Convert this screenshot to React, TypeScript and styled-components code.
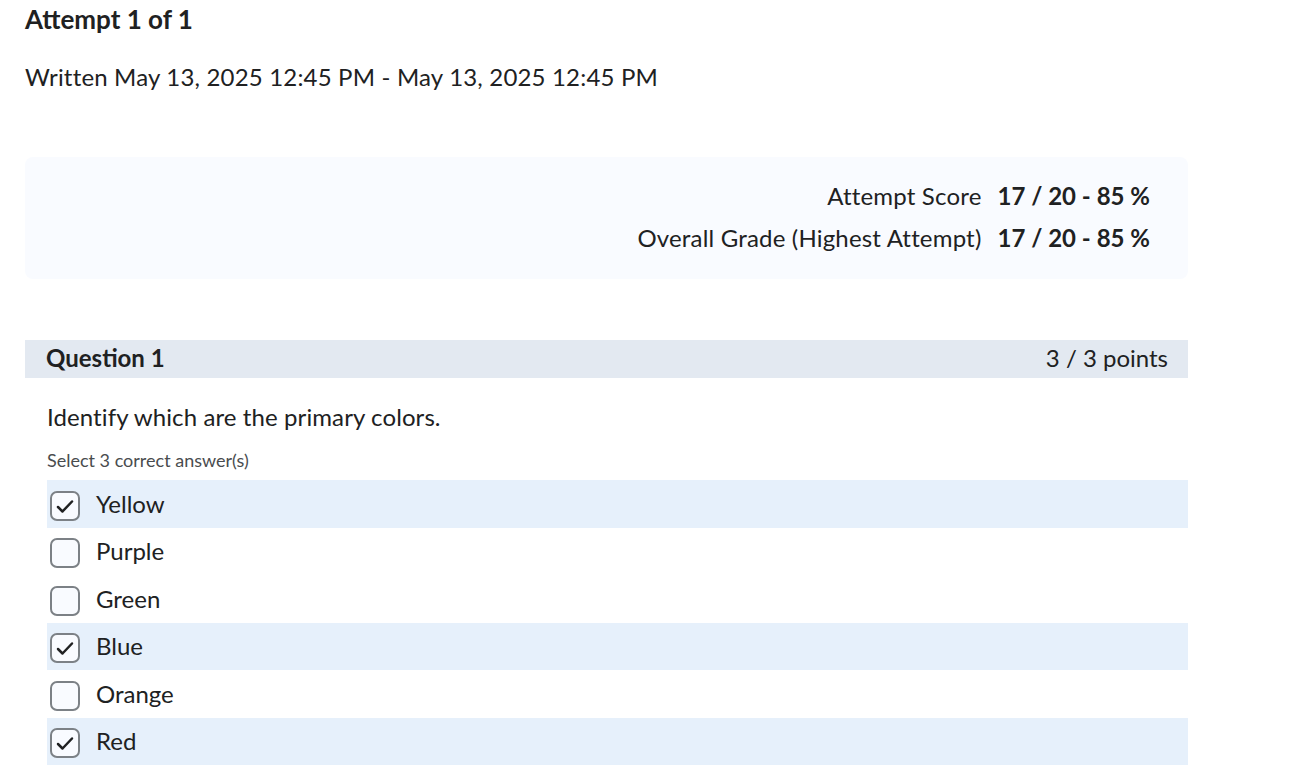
import React from 'react';
import styled, { createGlobalStyle } from 'styled-components';

const GlobalStyle = createGlobalStyle`
  body {
    margin: 0;
    background: #ffffff;
    font-family: Lato, "Noto Sans", sans-serif;
    color: #202122;
  }
`;

const Page = styled.div`
  width: 1163px;
  padding: 0 25px;
`;

const Heading = styled.h2`
  margin: 4px 0 0;
  font-size: 26px;
  font-weight: 700;
  line-height: 30px;
`;

const Written = styled.p`
  margin: 28px 0 0;
  font-size: 24px;
  line-height: 30px;
  letter-spacing: 0.18px;
`;

const ScorePanel = styled.div`
  margin-top: 65px;
  height: 122px;
  box-sizing: border-box;
  padding: 24px 38px 0 0;
  background: #f9fbff;
  border-radius: 8px;
  display: flex;
  justify-content: flex-end;
`;

const ScoreGrid = styled.div`
  display: grid;
  grid-template-columns: auto auto;
  column-gap: 16px;
  row-gap: 12px;
  align-content: start;
  font-size: 24px;
  line-height: 30px;
  letter-spacing: 0.18px;
`;

const ScoreLabel = styled.span`
  text-align: right;
`;

const ScoreValue = styled.span`
  font-weight: 700;
  letter-spacing: 0;
`;

const QuestionHeader = styled.div`
  margin-top: 61px;
  height: 38px;
  display: flex;
  align-items: center;
  justify-content: space-between;
  padding: 0 20px 2px 21px;
  box-sizing: border-box;
  background: #e3e9f1;
  font-size: 24px;
  line-height: 30px;
`;

const QuestionTitle = styled.span`
  font-weight: 700;
`;

const QuestionBody = styled.div`
  padding-left: 22px;
`;

const Prompt = styled.p`
  margin: 24px 0 0;
  font-size: 24px;
  line-height: 30px;
  letter-spacing: 0.1px;
`;

const Hint = styled.p`
  margin: 17px 0 0;
  font-size: 18px;
  line-height: 22px;
  color: #494c4e;
`;

const OptionList = styled.div`
  margin-top: 9px;
  display: flex;
  flex-direction: column;
`;

const OptionRow = styled.div<{ selected?: boolean }>`
  height: 47.5px;
  display: flex;
  align-items: center;
  gap: 16px;
  padding-left: 3px;
  background: ${p => (p.selected ? '#e6f0fb' : 'transparent')};
  font-size: 24px;
  line-height: 30px;
`;

const Box = styled.span`
  width: 30px;
  height: 30px;
  box-sizing: border-box;
  margin-top: 4px;
  border: 2px solid #7c8186;
  border-radius: 7px;
  background: #f9fbff;
  display: flex;
  align-items: center;
  justify-content: center;
  flex-shrink: 0;
`;

const CheckMark = () => (
  <svg width="24" height="24" viewBox="0 0 24 24" fill="none">
    <path d="M5 13 L9.5 17.5 L19 7.5" stroke="#202122" strokeWidth="2.5" strokeLinecap="round" strokeLinejoin="round" />
  </svg>
);

const options = [
  { label: 'Yellow', checked: true },
  { label: 'Purple', checked: false },
  { label: 'Green', checked: false },
  { label: 'Blue', checked: true },
  { label: 'Orange', checked: false },
  { label: 'Red', checked: true },
];

export default function App() {
  return (
    <>
      <GlobalStyle />
      <Page>
        <Heading>Attempt 1 of 1</Heading>
        <Written>Written May 13, 2025 12:45 PM - May 13, 2025 12:45 PM</Written>
        <ScorePanel>
          <ScoreGrid>
            <ScoreLabel>Attempt Score</ScoreLabel>
            <ScoreValue>17 / 20 - 85 %</ScoreValue>
            <ScoreLabel>Overall Grade (Highest Attempt)</ScoreLabel>
            <ScoreValue>17 / 20 - 85 %</ScoreValue>
          </ScoreGrid>
        </ScorePanel>
        <QuestionHeader>
          <QuestionTitle>Question 1</QuestionTitle>
          <span>3 / 3 points</span>
        </QuestionHeader>
        <QuestionBody>
          <Prompt>Identify which are the primary colors.</Prompt>
          <Hint>Select 3 correct answer(s)</Hint>
          <OptionList>
            {options.map(o => (
              <OptionRow key={o.label} selected={o.checked}>
                <Box>{o.checked && <CheckMark />}</Box>
                <span>{o.label}</span>
              </OptionRow>
            ))}
          </OptionList>
        </QuestionBody>
      </Page>
    </>
  );
}
